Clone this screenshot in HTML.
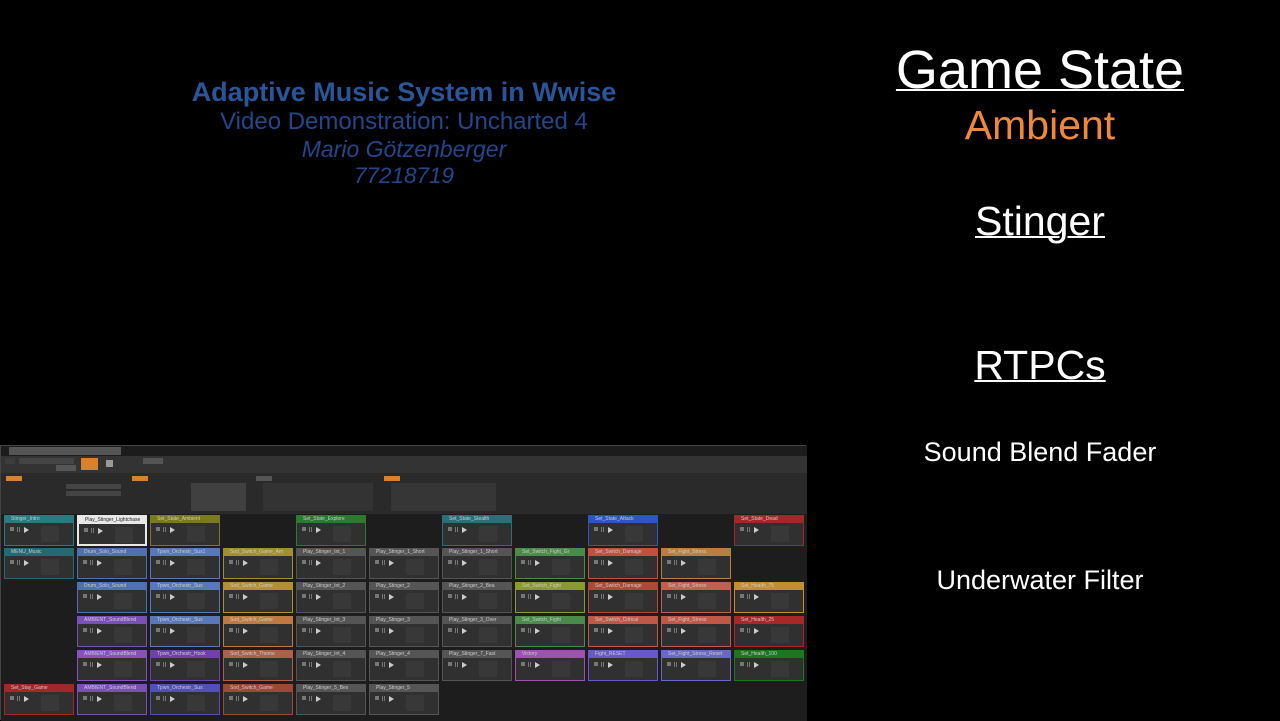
<!DOCTYPE html>
<html><head><meta charset="utf-8"><style>
*{margin:0;padding:0;box-sizing:border-box}
body{width:1280px;height:720px;background:#000;position:relative;overflow:hidden;font-family:"Liberation Sans",sans-serif}
.t{position:absolute;text-align:center;white-space:nowrap}
#w{position:absolute;left:0;top:445px;width:806px;height:275px;background:#262626;border:1px solid #444}
.c{position:absolute;width:70px;height:31px;background:#303030;border:1px solid var(--k)}
.c b{display:block;height:7px;background:var(--k);font:5px "Liberation Sans";color:#ccc;padding-left:6px;line-height:7px;overflow:hidden}
.c i{position:absolute;left:5px;top:11px;width:4px;height:4px;background:#777}
.c u{position:absolute;left:12px;top:11px;width:3px;height:5px;border-left:1px solid #777;border-right:1px solid #777}
.c s{position:absolute;left:19px;top:11px;border-left:5px solid #ccc;border-top:3px solid transparent;border-bottom:3px solid transparent}
.c em{position:absolute;left:36px;top:10px;width:18px;height:16px;background:#383838}
.o{position:absolute;background:#d9822b;height:5px}
.g{position:absolute;background:#3c3c3c}
</style></head><body>
<div class="t" style="left:0;width:808px;top:77px;font-size:27px;font-weight:bold;color:#2a5598">Adaptive Music System in Wwise</div>
<div class="t" style="left:0;width:808px;top:108px;font-size:24px;color:#23478a">Video Demonstration: Uncharted 4</div>
<div class="t" style="left:0;width:808px;top:136px;font-size:23px;font-style:italic;color:#23478a">Mario Götzenberger</div>
<div class="t" style="left:0;width:808px;top:163px;font-size:22.5px;font-style:italic;color:#23478a">77218719</div>

<div class="t" style="left:840px;width:400px;top:39px;font-size:54px;color:#fff;text-decoration:underline;text-decoration-thickness:2px">Game State</div>
<div class="t" style="left:840px;width:400px;top:102px;font-size:41px;color:#f0883a">Ambient</div>
<div class="t" style="left:840px;width:400px;top:198px;font-size:41px;color:#fff;text-decoration:underline;text-decoration-thickness:2px">Stinger</div>
<div class="t" style="left:840px;width:400px;top:342px;font-size:41px;color:#fff;text-decoration:underline;text-decoration-thickness:2px">RTPCs</div>
<div class="t" style="left:840px;width:400px;top:437px;font-size:27px;color:#fff">Sound Blend Fader</div>
<div class="t" style="left:840px;width:400px;top:565px;font-size:27px;color:#fff">Underwater Filter</div>

<div id="w">
<div style="position:absolute;left:0;top:0;width:806px;height:10px;background:#1c1c1c"></div>
<div style="position:absolute;left:8px;top:1px;width:112px;height:8px;background:#555"></div>
<div style="position:absolute;left:0;top:10px;width:806px;height:17px;background:#333"></div>
<div class="g" style="left:4px;top:12px;width:10px;height:6px"></div>
<div class="g" style="left:18px;top:12px;width:55px;height:6px;background:#444"></div>
<div class="g" style="left:55px;top:19px;width:20px;height:6px;background:#555"></div>
<div class="o" style="left:80px;top:12px;width:17px;height:12px"></div>
<div style="position:absolute;left:105px;top:14px;width:7px;height:7px;background:#999"></div>
<div class="g" style="left:142px;top:12px;width:20px;height:6px;background:#555"></div>
<div style="position:absolute;left:0;top:27px;width:806px;height:41px;background:#2a2a2a"></div>
<div class="o" style="left:5px;top:30px;width:16px"></div>
<div class="o" style="left:131px;top:30px;width:16px"></div>
<div class="g" style="left:255px;top:30px;width:16px;height:5px;background:#555"></div>
<div class="o" style="left:383px;top:30px;width:16px"></div>
<div class="g" style="left:65px;top:38px;width:55px;height:5px;background:#444"></div>
<div class="g" style="left:65px;top:45px;width:55px;height:5px;background:#444"></div>
<div class="g" style="left:190px;top:37px;width:55px;height:28px;background:#404040"></div>
<div class="g" style="left:262px;top:37px;width:110px;height:28px;background:#333"></div>
<div class="g" style="left:390px;top:37px;width:105px;height:28px;background:#363636"></div>
<div style="position:absolute;left:0;top:68px;width:806px;height:207px;background:#1d1d1d"></div>
</div>

<div class="c" style="left:4px;top:515px;--k:#2a7a80"><b>Stinger_Intro</b><i></i><u></u><s></s><em></em></div>
<div class="c" style="left:77px;top:515px;--k:#e8e8e8;border-width:2px"><b style="color:#222">Play_Stinger_Lightchase</b><i></i><u></u><s></s><em></em></div>
<div class="c" style="left:150px;top:515px;--k:#7a7a20"><b>Set_State_Ambient</b><i></i><u></u><s></s><em></em></div>
<div class="c" style="left:296px;top:515px;--k:#2a7a30"><b>Set_State_Explore</b><i></i><u></u><s></s><em></em></div>
<div class="c" style="left:442px;top:515px;--k:#2a7078"><b>Set_State_Stealth</b><i></i><u></u><s></s><em></em></div>
<div class="c" style="left:588px;top:515px;--k:#2a58c0"><b>Set_State_Attack</b><i></i><u></u><s></s><em></em></div>
<div class="c" style="left:734px;top:515px;--k:#a02828"><b>Set_State_Dead</b><i></i><u></u><s></s><em></em></div>

<div class="c" style="left:4px;top:548px;--k:#236b73"><b>MENU_Music</b><i></i><u></u><s></s><em></em></div>
<div class="c" style="left:77px;top:548px;--k:#5070b0"><b>Drum_Solo_Sound</b><i></i><u></u><s></s><em></em></div>
<div class="c" style="left:150px;top:548px;--k:#5878b8"><b>Tpwn_Orchestr_Sus1</b><i></i><u></u><s></s><em></em></div>
<div class="c" style="left:223px;top:548px;--k:#a09030"><b>Sod_Switch_Game_Am</b><i></i><u></u><s></s><em></em></div>
<div class="c" style="left:296px;top:548px;--k:#555"><b>Play_Stinger_Int_1</b><i></i><u></u><s></s><em></em></div>
<div class="c" style="left:369px;top:548px;--k:#555"><b>Play_Stinger_1_Short</b><i></i><u></u><s></s><em></em></div>
<div class="c" style="left:442px;top:548px;--k:#555"><b>Play_Stinger_1_Short</b><i></i><u></u><s></s><em></em></div>
<div class="c" style="left:515px;top:548px;--k:#4a8a4a"><b>Set_Switch_Fight_Gr</b><i></i><u></u><s></s><em></em></div>
<div class="c" style="left:588px;top:548px;--k:#c05040"><b>Set_Switch_Damage</b><i></i><u></u><s></s><em></em></div>
<div class="c" style="left:661px;top:548px;--k:#b88040"><b>Set_Fight_Stress</b><i></i><u></u><s></s><em></em></div>

<div class="c" style="left:77px;top:582px;--k:#5070b0"><b>Drum_Solo_Sound</b><i></i><u></u><s></s><em></em></div>
<div class="c" style="left:150px;top:582px;--k:#5878b8"><b>Tpwn_Orchestr_Sus</b><i></i><u></u><s></s><em></em></div>
<div class="c" style="left:223px;top:582px;--k:#b09030"><b>Sod_Switch_Game</b><i></i><u></u><s></s><em></em></div>
<div class="c" style="left:296px;top:582px;--k:#555"><b>Play_Stinger_Int_2</b><i></i><u></u><s></s><em></em></div>
<div class="c" style="left:369px;top:582px;--k:#555"><b>Play_Stinger_2</b><i></i><u></u><s></s><em></em></div>
<div class="c" style="left:442px;top:582px;--k:#555"><b>Play_Stinger_2_Bea</b><i></i><u></u><s></s><em></em></div>
<div class="c" style="left:515px;top:582px;--k:#8a9a30"><b>Set_Switch_Fight</b><i></i><u></u><s></s><em></em></div>
<div class="c" style="left:588px;top:582px;--k:#b04838"><b>Set_Switch_Damage</b><i></i><u></u><s></s><em></em></div>
<div class="c" style="left:661px;top:582px;--k:#c06050"><b>Set_Fight_Stress</b><i></i><u></u><s></s><em></em></div>
<div class="c" style="left:734px;top:582px;--k:#c09030"><b>Set_Health_75</b><i></i><u></u><s></s><em></em></div>

<div class="c" style="left:77px;top:616px;--k:#7a50b8"><b>AMBIENT_SoundBlend</b><i></i><u></u><s></s><em></em></div>
<div class="c" style="left:150px;top:616px;--k:#5878b8"><b>Tpwn_Orchestr_Sus</b><i></i><u></u><s></s><em></em></div>
<div class="c" style="left:223px;top:616px;--k:#c07a40"><b>Sod_Switch_Game</b><i></i><u></u><s></s><em></em></div>
<div class="c" style="left:296px;top:616px;--k:#555"><b>Play_Stinger_Int_3</b><i></i><u></u><s></s><em></em></div>
<div class="c" style="left:369px;top:616px;--k:#555"><b>Play_Stinger_3</b><i></i><u></u><s></s><em></em></div>
<div class="c" style="left:442px;top:616px;--k:#555"><b>Play_Stinger_3_Over</b><i></i><u></u><s></s><em></em></div>
<div class="c" style="left:515px;top:616px;--k:#4a8a4a"><b>Set_Switch_Fight</b><i></i><u></u><s></s><em></em></div>
<div class="c" style="left:588px;top:616px;--k:#c05848"><b>Set_Switch_Critical</b><i></i><u></u><s></s><em></em></div>
<div class="c" style="left:661px;top:616px;--k:#c05848"><b>Set_Fight_Stress</b><i></i><u></u><s></s><em></em></div>
<div class="c" style="left:734px;top:616px;--k:#a82828"><b>Set_Health_25</b><i></i><u></u><s></s><em></em></div>

<div class="c" style="left:77px;top:650px;--k:#8a50c0"><b>AMBIENT_SoundBlend</b><i></i><u></u><s></s><em></em></div>
<div class="c" style="left:150px;top:650px;--k:#7040b0"><b>Tpwn_Orchestr_Hook</b><i></i><u></u><s></s><em></em></div>
<div class="c" style="left:223px;top:650px;--k:#b06048"><b>Sod_Switch_Theme</b><i></i><u></u><s></s><em></em></div>
<div class="c" style="left:296px;top:650px;--k:#555"><b>Play_Stinger_Int_4</b><i></i><u></u><s></s><em></em></div>
<div class="c" style="left:369px;top:650px;--k:#555"><b>Play_Stinger_4</b><i></i><u></u><s></s><em></em></div>
<div class="c" style="left:442px;top:650px;--k:#555"><b>Play_Stinger_7_Fast</b><i></i><u></u><s></s><em></em></div>
<div class="c" style="left:515px;top:650px;--k:#a050b0"><b>Victory</b><i></i><u></u><s></s><em></em></div>
<div class="c" style="left:588px;top:650px;--k:#6858c8"><b>Fight_RESET</b><i></i><u></u><s></s><em></em></div>
<div class="c" style="left:661px;top:650px;--k:#6868c8"><b>Set_Fight_Stress_Reset</b><i></i><u></u><s></s><em></em></div>
<div class="c" style="left:734px;top:650px;--k:#1a7a1a"><b>Set_Health_100</b><i></i><u></u><s></s><em></em></div>

<div class="c" style="left:4px;top:684px;--k:#a02828"><b>Set_Stay_Game</b><i></i><u></u><s></s><em></em></div>
<div class="c" style="left:77px;top:684px;--k:#7a50b8"><b>AMBIENT_SoundBlend</b><i></i><u></u><s></s><em></em></div>
<div class="c" style="left:150px;top:684px;--k:#5050b8"><b>Tpwn_Orchestr_Sus</b><i></i><u></u><s></s><em></em></div>
<div class="c" style="left:223px;top:684px;--k:#a04838"><b>Sod_Switch_Game</b><i></i><u></u><s></s><em></em></div>
<div class="c" style="left:296px;top:684px;--k:#555"><b>Play_Stinger_5_Bes</b><i></i><u></u><s></s><em></em></div>
<div class="c" style="left:369px;top:684px;--k:#555"><b>Play_Stinger_5</b><i></i><u></u><s></s><em></em></div>
</body></html>
